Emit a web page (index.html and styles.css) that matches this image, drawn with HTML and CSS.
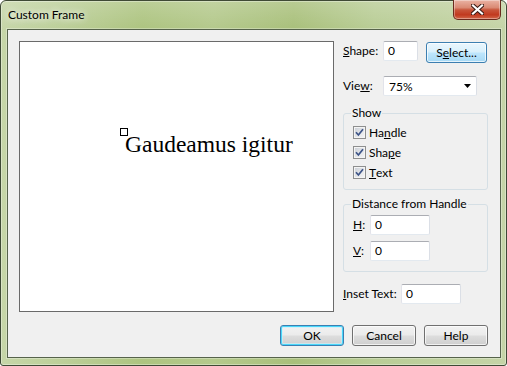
FILE: index.html
```html
<!DOCTYPE html>
<html lang="en">
<head>
<meta charset="utf-8">
<title>Custom Frame</title>
<link rel="stylesheet" href="styles.css">
</head>
<body>
<div class="window">
  <div class="titlebar">
    <span class="title">Custom Frame</span>
    <div class="close" aria-label="Close">
      <svg width="13" height="11" viewBox="0 0 13 11">
        <path d="M2 1.5 L11 9.5 M11 1.5 L2 9.5" stroke="#3a1a14" stroke-width="4.2" stroke-linecap="square" fill="none"/>
        <path d="M2 1.5 L11 9.5 M11 1.5 L2 9.5" stroke="#ffffff" stroke-width="2.2" stroke-linecap="square" fill="none"/>
      </svg>
    </div>
  </div>
  <div class="client">
    <div class="main">
      <div class="preview">
        <div class="handle"></div>
        <div class="sample">Gaudeamus igitur</div>
      </div>
      <div class="side">
        <div class="row r-shape">
          <span class="lbl w40"><u>S</u>hape:</span>
          <div class="edit e-shape">0</div>
          <div class="btn hot">S<u>e</u>lect...</div>
        </div>
        <div class="row r-view">
          <span class="lbl w40">Vie<u>w</u>:</span>
          <div class="combo">
            <span>75%</span>
            <svg class="arrow" width="7" height="4" viewBox="0 0 7 4"><path d="M0 0 H7 L3.5 4 Z" fill="#000"/></svg>
          </div>
        </div>
        <fieldset class="group g-show">
          <legend>Show</legend>
          <div class="check"><span class="box"><svg width="9" height="9" viewBox="0 0 9 9"><path d="M1 4.2 L3.4 7 L8 1.2" stroke="#3d5488" stroke-width="1.7" fill="none"/></svg></span>Ha<u>n</u>dle</div>
          <div class="check"><span class="box"><svg width="9" height="9" viewBox="0 0 9 9"><path d="M1 4.2 L3.4 7 L8 1.2" stroke="#3d5488" stroke-width="1.7" fill="none"/></svg></span>Sha<u>p</u>e</div>
          <div class="check"><span class="box"><svg width="9" height="9" viewBox="0 0 9 9"><path d="M1 4.2 L3.4 7 L8 1.2" stroke="#3d5488" stroke-width="1.7" fill="none"/></svg></span><u>T</u>ext</div>
        </fieldset>
        <fieldset class="group g-dist">
          <legend>Distance from Handle</legend>
          <div class="row drow"><span class="lbl w17"><u>H</u>:</span><div class="edit e-dist">0</div></div>
          <div class="row drow"><span class="lbl w17"><u>V</u>:</span><div class="edit e-dist">0</div></div>
        </fieldset>
        <div class="row r-inset">
          <span class="lbl w58"><u>I</u>nset Text:</span>
          <div class="edit e-inset">0</div>
        </div>
      </div>
    </div>
    <div class="buttons">
      <div class="btn default">OK</div>
      <div class="btn">Cancel</div>
      <div class="btn">Help</div>
    </div>
  </div>
</div>
</body>
</html>
```

FILE: styles.css
```css
html, body {
  margin: 0;
  padding: 0;
}
body {
  width: 507px;
  height: 366px;
  overflow: hidden;
  background: #ffffff;
  font-family: "Lato", "Liberation Sans", sans-serif;
  font-size: 12px;
  color: #000;
}
u { text-decoration: underline; text-underline-offset: 1px; }

.window {
  box-sizing: border-box;
  width: 507px;
  height: 366px;
  border: 1px solid #3f4a35;
  border-radius: 6px 6px 3px 3px;
  padding: 0 5px 7px 6px;
  display: flex;
  flex-direction: column;
  background:
    linear-gradient(to bottom, rgba(255,255,255,0.18) 0px, rgba(255,255,255,0) 28px),
    linear-gradient(to right, #c6d6a8 0%, #bccf99 12%, #adc480 28%, #b4c98c 42%, #a9c07b 58%, #b9cd96 74%, #c5d4a7 100%);
  box-shadow: inset 0 0 0 1px rgba(255,255,255,0.35);
}

.titlebar {
  height: 28px;
  display: flex;
  align-items: flex-start;
}
.title {
  margin-left: 1px;
  line-height: 28px;
  color: #000;
  text-shadow: 0 0 6px rgba(255,255,255,0.9), 0 0 10px rgba(255,255,255,0.7);
}
.close {
  margin-left: auto;
  margin-top: -1px;
  box-sizing: border-box;
  width: 48px;
  height: 20px;
  border: 1px solid #6a2a1d;
  border-top: none;
  border-radius: 0 0 5px 5px;
  background: linear-gradient(to bottom, #eab3a4 0%, #da8a74 40%, #c8553b 52%, #c1391f 78%, #d2684a 100%);
  box-shadow: inset 0 0 0 1px rgba(255,255,255,0.35);
  display: flex;
  align-items: center;
  justify-content: center;
}

.client {
  box-sizing: border-box;
  width: 494px;
  height: 329px;
  border: 1px solid #56634b;
  background: #f0f0f0;
  padding: 11px 12px 0 11px;
  box-shadow: 0 0 0 1px rgba(255,255,255,0.3);
}

.main {
  display: flex;
  align-items: flex-start;
}
.preview {
  position: relative;
  box-sizing: border-box;
  width: 315px;
  height: 271px;
  border: 1px solid #6a6a6a;
  background: #ffffff;
}
.handle {
  position: absolute;
  left: 100px;
  top: 86px;
  width: 8px;
  height: 8px;
  box-sizing: border-box;
  border: 1px solid #000;
  background: #fff;
}
.sample {
  position: absolute;
  left: 105px;
  top: 90px;
  font-family: "Liberation Serif", serif;
  font-size: 23.5px;
  line-height: 24px;
  white-space: nowrap;
}

.side {
  margin-left: 9px;
  width: 145px;
  display: flex;
  flex-direction: column;
}
.row {
  display: flex;
  align-items: center;
}
.lbl {
  flex: none;
  line-height: 20px;
  white-space: nowrap;
}
.w40 { width: 40px; }
.w17 { width: 17px; }
.w58 { width: 58px; }

.r-shape { height: 22px; align-items: flex-start; }
.r-view { margin-top: 13px; height: 20px; }
.r-inset { margin-top: 12px; height: 20px; }

.edit {
  box-sizing: border-box;
  height: 20px;
  padding-left: 4px;
  line-height: 18px;
  background: #fff;
  border: 1px solid;
  border-color: #abadb3 #dbdfe6 #e3e9ef #e2e3ea;
  border-radius: 2px;
}
.e-shape { width: 35px; margin-right: 8px; }
.e-dist { width: 60px; }
.e-inset { width: 60px; }

.combo {
  box-sizing: border-box;
  width: 94px;
  height: 20px;
  padding: 0 5px 0 5px;
  display: flex;
  align-items: center;
  background: #fff;
  border: 1px solid;
  border-color: #abadb3 #dbdfe6 #e3e9ef #e2e3ea;
  border-radius: 2px;
}
.combo .arrow { margin-left: auto; }

.btn {
  box-sizing: border-box;
  height: 21px;
  display: flex;
  align-items: center;
  justify-content: center;
  border: 1px solid #707070;
  border-radius: 3px;
  background: linear-gradient(to bottom, #f2f2f2 0%, #ebebeb 48%, #dddddd 52%, #cfcfcf 100%);
  box-shadow: inset 0 0 0 1px rgba(255,255,255,0.7);
  width: 64px;
}
.btn.hot {
  width: 61px;
  margin-top: 1px;
  border-color: #3c7fb1;
  background: linear-gradient(to bottom, #eaf6fd 0%, #d9f0fc 48%, #bee6fd 52%, #a7d9f5 100%);
}
.btn.default {
  border-color: #3c7fb1;
  box-shadow: inset 0 0 0 1px #48d7fb, inset 0 0 0 2px rgba(200,240,252,0.6);
}

.group {
  margin: 0;
  min-width: 0;
  border: 1px solid #d5dfe5;
  border-radius: 3px;
}
.group legend {
  padding: 0 1px;
  margin-left: -2px;
  line-height: 14px;
}
.g-show {
  margin-top: 10px;
  padding: 2px 0 7px 9px;
}
.g-dist {
  margin-top: 7px;
  padding: 4px 0 10px 9px;
}
.check {
  height: 20px;
  display: flex;
  align-items: center;
}
.box {
  box-sizing: border-box;
  width: 13px;
  height: 13px;
  margin-right: 3px;
  border: 1px solid #8e8f8f;
  background: linear-gradient(135deg, #c9ced5 0%, #e4e6e9 55%, #f6f6f6 100%);
  box-shadow: inset 0 0 0 1px #f4f4f4;
  display: flex;
  align-items: center;
  justify-content: center;
}
.drow { height: 20px; }
.drow + .drow { margin-top: 6px; }

.buttons {
  margin-top: 13px;
  display: flex;
  justify-content: flex-end;
  gap: 8px;
}
```
